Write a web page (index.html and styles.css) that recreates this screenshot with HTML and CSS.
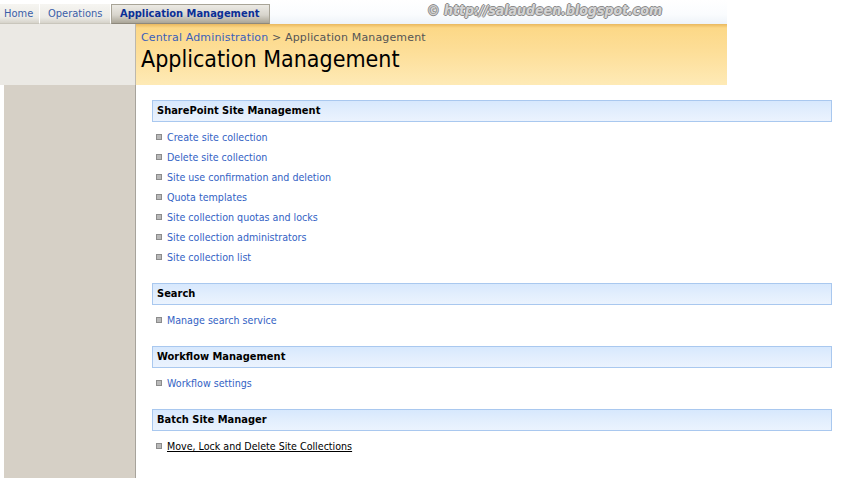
FILE: index.html
```html
<!DOCTYPE html>
<html>
<head>
<meta charset="utf-8">
<link rel="stylesheet" href="styles.css">
</head>
<body>
<div class="page">
  <div class="topbar">
    <div class="tabs">
      <a class="tab tab-home">Home</a>
      <a class="tab tab-ops">Operations</a>
      <a class="tab tab-sel">Application Management</a>
    </div>
    <div class="watermark">© http://salaudeen.blogspot.com</div>
  </div>
  <div class="nav-top"></div>
  <div class="titlearea">
    <div class="crumb"><a class="crumb-link">Central Administration</a> &gt; Application Management</div>
    <h1 class="title">Application Management</h1>
  </div>
  <div class="nav-col"><div class="nav-fill"></div></div>
  <div class="content">
    <div class="section">
      <div class="sec-head">SharePoint Site Management</div>
      <ul class="links">
        <li><a class="lnk">Create site collection</a></li>
        <li><a class="lnk">Delete site collection</a></li>
        <li><a class="lnk">Site use confirmation and deletion</a></li>
        <li><a class="lnk">Quota templates</a></li>
        <li><a class="lnk">Site collection quotas and locks</a></li>
        <li><a class="lnk">Site collection administrators</a></li>
        <li><a class="lnk">Site collection list</a></li>
      </ul>
    </div>
    <div class="section">
      <div class="sec-head">Search</div>
      <ul class="links">
        <li><a class="lnk">Manage search service</a></li>
      </ul>
    </div>
    <div class="section">
      <div class="sec-head">Workflow Management</div>
      <ul class="links">
        <li><a class="lnk">Workflow settings</a></li>
      </ul>
    </div>
    <div class="section">
      <div class="sec-head">Batch Site Manager</div>
      <ul class="links">
        <li><a class="lnk lnk-black">Move, Lock and Delete Site Collections</a></li>
      </ul>
    </div>
  </div>
</div>
</body>
</html>
```

FILE: styles.css
```css
html, body {
  margin: 0;
  padding: 0;
  background: #ffffff;
}
body {
  width: 842px;
  height: 480px;
  overflow: hidden;
  font-family: "DejaVu Sans Condensed", "DejaVu Sans", sans-serif;
  font-size: 11px;
}
.page {
  display: grid;
  grid-template-columns: 136px 591px 1fr;
  grid-template-rows: 24px 61px 393px;
}
.topbar {
  grid-column: 1 / 3;
  display: flex;
}
.tabs {
  display: flex;
  padding-top: 4px;
  background: #ffffff;
  box-sizing: border-box;
  height: 24px;
}
.tab {
  box-sizing: border-box;
  display: flex;
  align-items: center;
  height: 20px;
  padding: 0 0 1px 4px;
  white-space: nowrap;
  color: #3b5ea8;
  background: linear-gradient(to bottom, #f6f5f1 0%, #ecebe6 70%, #d6d3ca 100%);
  border-right: 1px solid #ffffff;
  border-bottom: 1px solid #c9c6bc;
  font-size: 11px;
}
.tab-home {
  width: 40px;
}
.tab-ops {
  width: 71px;
  padding-left: 8px;
}
.tab-sel {
  width: 159px;
  padding-left: 8px;
  font-weight: bold;
  font-size: 11px;
  color: #0b2f96;
  background: linear-gradient(to bottom, #eceae4 0%, #d8d5cd 55%, #aaa597 100%);
  border: 1px solid #a8a497;
  border-bottom: 1px solid #8e897c;
}
.watermark {
  flex: 1;
  padding-left: 157px;
  padding-top: 2px;
  white-space: nowrap;
  font-family: "DejaVu Sans Condensed", "DejaVu Sans", sans-serif;
  font-style: italic;
  font-weight: bold;
  font-size: 14px;
  color: #d4d4d4;
  text-shadow: 1px 0 0 #8a8a8a, -1px 0 0 #8a8a8a, 0 1px 0 #8a8a8a, 0 -1px 0 #8a8a8a;
  background: linear-gradient(to bottom, #ffffff 0%, #fafcfe 60%, #eef3f8 100%);
}
.nav-top {
  grid-column: 1;
  background: #ebe9e4;
  border-right: 1px solid #bcb8ae;
}
.titlearea {
  grid-column: 2;
  background: linear-gradient(to bottom, #e9b85e 0px, #fcd887 4px, #fddf9a 30px, #feeab6 61px);
  padding-left: 5px;
}
.crumb {
  font-family: "DejaVu Sans", sans-serif;
  font-size: 11px;
  color: #555555;
  margin-top: 7px;
  letter-spacing: 0.15px;
  white-space: nowrap;
}
.crumb-link {
  color: #3a5fba;
}
.title {
  margin: 2px 0 0 0;
  font-family: "DejaVu Sans Condensed", "DejaVu Sans", sans-serif;
  font-weight: normal;
  font-size: 23px;
  color: #000000;
  line-height: 26px;
  white-space: nowrap;
}
.nav-col {
  grid-column: 1;
  display: flex;
}
.nav-fill {
  flex: 1;
  margin-left: 4px;
  background: #d6d0c6;
  border-right: 1px solid #a7a39b;
}
.content {
  grid-column: 2 / 4;
  padding: 15px 0 0 16px;
  width: 680px;
}
.section {
  margin-bottom: 16px;
}
.sec-head {
  height: 20px;
  line-height: 20px;
  border: 1px solid #a9c8ef;
  background: linear-gradient(to bottom, #d7e8fd 0%, #e2eefd 50%, #ebf3fe 100%);
  padding-left: 4px;
  font-weight: bold;
  font-size: 11px;
  color: #000000;
}
.links {
  list-style: none;
  margin: 5px 0 0 0;
  padding: 0;
}
.links li {
  display: flex;
  align-items: center;
  height: 20px;
  padding-left: 4px;
}
.links li::before {
  content: "";
  width: 4px;
  height: 4px;
  margin-right: 5px;
  border: 1px solid #8c8c8c;
  background: #b9b9b9;
}
.lnk {
  color: #3362c4;
  font-size: 10.6px;
}
.lnk-black {
  color: #000000;
  text-decoration: underline;
}
```
